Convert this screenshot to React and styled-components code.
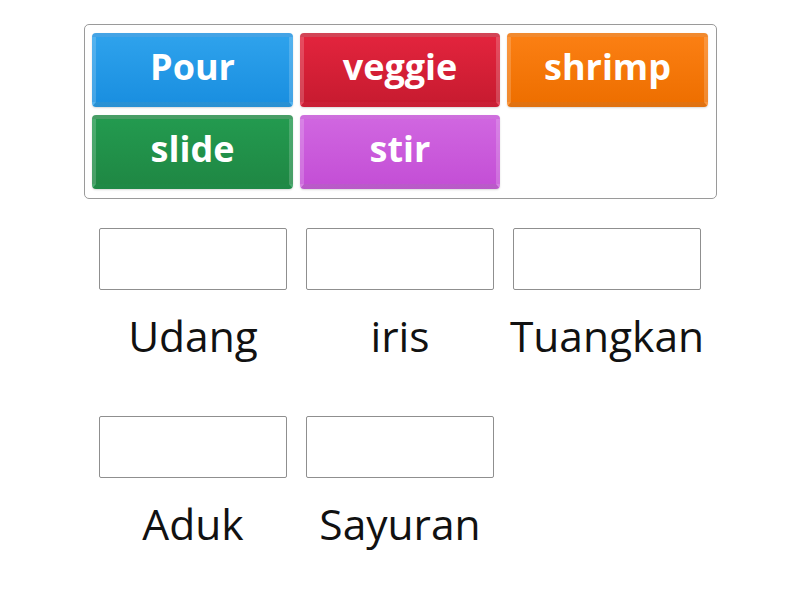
import React from 'react';
import styled, { createGlobalStyle } from 'styled-components';

const GlobalStyle = createGlobalStyle`
    html, body {
        margin: 0;
        padding: 0;
        background: #fff;
        font-family: "Open Sans", "Liberation Sans", sans-serif;
    }
`;

const Page = styled.div`
    width: 800px;
    height: 600px;
    padding-top: 24px;
    box-sizing: border-box;
`;

const TileBank = styled.div`
    width: 633px;
    height: 175px;
    margin-left: 84px;
    box-sizing: border-box;
    border: 1px solid #9a9a9a;
    border-radius: 5px;
    padding: 8px 8px 0 7px;
    display: grid;
    grid-template-columns: 201px 200px 201px;
    grid-auto-rows: 74px;
    column-gap: 7px;
    row-gap: 8px;
`;

const Tile = styled.div`
    box-sizing: border-box;
    border-radius: 4px;
    background: linear-gradient(to bottom, ${p => p.$top}, ${p => p.$bottom});
    border: 4px solid rgba(255, 255, 255, 0.18);
    border-bottom: 5px solid rgba(0, 0, 0, 0.1);
    box-shadow: 0 1px 2px rgba(0, 0, 0, 0.15);
    display: flex;
    align-items: center;
    justify-content: center;
    color: #fff;
    font-weight: 700;
    font-size: 36px;
    padding-bottom: 6px;
`;

const Targets = styled.div`
    margin-left: 99px;
    margin-top: 29px;
    display: grid;
    grid-template-columns: repeat(3, 188px);
    column-gap: 19px;
    row-gap: 0;
`;

const Slot = styled.div`
    display: flex;
    flex-direction: column;
    align-items: center;
    height: 188px;
`;

const DropBox = styled.div`
    width: 188px;
    height: 62px;
    box-sizing: border-box;
    border: 1px solid #8f8f8f;
    border-radius: 2px;
    background: #fff;
`;

const Label = styled.div`
    margin-top: 19px;
    font-size: 42.5px;
    line-height: 54px;
    color: #111;
    white-space: nowrap;
`;

const tiles = [
    { text: 'Pour', top: '#2ea2ec', bottom: '#1a8fe0' },
    { text: 'veggie', top: '#e2243d', bottom: '#c81b30' },
    { text: 'shrimp', top: '#fb7f13', bottom: '#ee6f00' },
    { text: 'slide', top: '#239a4f', bottom: '#1f8844' },
    { text: 'stir', top: '#d066e0', bottom: '#c44fd6' },
];

const targets = ['Udang', 'iris', 'Tuangkan', 'Aduk', 'Sayuran'];

const App = () => {
    return (
        <Page>
            <GlobalStyle />
            <TileBank>
                {tiles.map(t => (
                    <Tile key={t.text} $top={t.top} $bottom={t.bottom}>{t.text}</Tile>
                ))}
            </TileBank>
            <Targets>
                {targets.map(label => (
                    <Slot key={label}>
                        <DropBox />
                        <Label>{label}</Label>
                    </Slot>
                ))}
            </Targets>
        </Page>
    );
};

export default App;
